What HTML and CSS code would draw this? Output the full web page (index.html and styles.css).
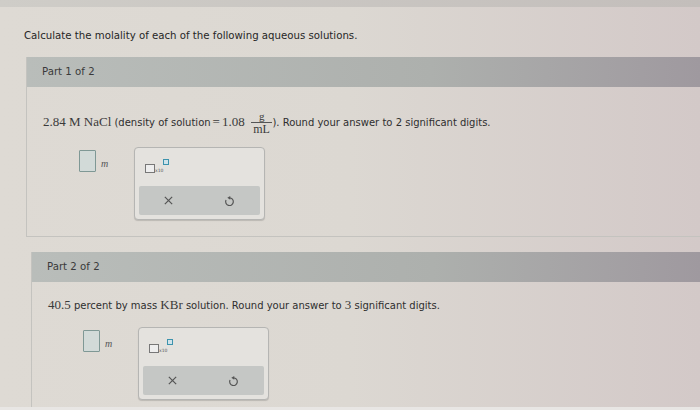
FILE: index.html
```html
<!DOCTYPE html>
<html>
<head>
<meta charset="utf-8">
<link rel="stylesheet" href="styles.css">
</head>
<body>
<div class="strip"></div>
<p class="title">Calculate the molality of each of the following aqueous solutions.</p>

<section class="part part1">
  <div class="part-head">Part 1 of 2</div>
  <div class="part-body">
    <p class="question"><span class="serif">2.84 M NaCl</span> (density of solution<span class="serif eq">=</span><span class="serif">1.08</span>
      <span class="frac"><span class="num">g</span><span class="den">mL</span></span>). Round your answer to 2 significant digits.</p>
    <div class="answer-row">
      <div class="answer"><span class="input"></span><span class="unit">m</span></div>
      <div class="widget">
        <div class="widget-top">
          <span class="sci"><span class="sq"></span><span class="x10">x10</span><span class="sup"></span></span>
        </div>
        <div class="widget-bar">
          <svg class="ico" width="11" height="11" viewBox="0 0 12 12"><path d="M2 2 L10 10 M10 2 L2 10" stroke="#555" stroke-width="1.3" fill="none"/></svg>
          <svg class="ico" width="11" height="12" viewBox="0 0 12 13"><path d="M6 3 A4.2 4.2 0 1 1 2.2 5.4" stroke="#555" stroke-width="1.3" fill="none"/><path d="M3.6 3 L6.8 1 L6.8 5 Z" fill="#555"/></svg>
        </div>
      </div>
    </div>
  </div>
</section>

<section class="part part2">
  <div class="part-head">Part 2 of 2</div>
  <div class="part-body">
    <p class="question"><span class="serif">40.5</span> percent by mass <span class="serif">KBr</span> solution. Round your answer to <span class="serif">3</span> significant digits.</p>
    <div class="answer-row">
      <div class="answer"><span class="input"></span><span class="unit">m</span></div>
      <div class="widget">
        <div class="widget-top">
          <span class="sci"><span class="sq"></span><span class="x10">x10</span><span class="sup"></span></span>
        </div>
        <div class="widget-bar">
          <svg class="ico" width="11" height="11" viewBox="0 0 12 12"><path d="M2 2 L10 10 M10 2 L2 10" stroke="#555" stroke-width="1.3" fill="none"/></svg>
          <svg class="ico" width="11" height="12" viewBox="0 0 12 13"><path d="M6 3 A4.2 4.2 0 1 1 2.2 5.4" stroke="#555" stroke-width="1.3" fill="none"/><path d="M3.6 3 L6.8 1 L6.8 5 Z" fill="#555"/></svg>
        </div>
      </div>
    </div>
  </div>
</section>
<div class="bottom"></div>
</body>
</html>
```
FILE: styles.css
```css
html, body {
  margin: 0;
  padding: 0;
}
body {
  width: 700px;
  height: 410px;
  overflow: hidden;
  position: relative;
  background: linear-gradient(90deg, #dedad4 0%, #dcd8d2 50%, #d3c9c8 100%);
  font-family: "DejaVu Sans", Verdana, sans-serif;
  font-size: 10.2px;
  color: #2e2e2e;
}
.strip {
  height: 7px;
  background: linear-gradient(90deg, #cfcdc8, #c3bebb);
}
.title {
  margin: 23px 0 0 24px;
  line-height: 11px;
  height: 11px;
  color: #262626;
}
.part {
  border-left: 1px solid #c4c3bf;
}
.part1 {
  margin: 16px 0 0 26px;
  border-bottom: 1px solid #c4c3bf;
  height: 179px;
}
.part2 {
  margin: 15px 0 0 31px;
  height: 160px;
}
.part-head {
  height: 30px;
  line-height: 30px;
  padding-left: 15px;
  background: linear-gradient(90deg, #b9bdba 0%, #adb0ad 60%, #9f999f 100%);
  color: #3a3a3a;
}
.part-body {
  padding-left: 16px;
}
.part1 .question {
  margin: 23px 0 0 0;
  line-height: 16px;
  font-size: 10px;
}
.part2 .question {
  margin: 15px 0 0 0;
  line-height: 16px;
  font-size: 10px;
}
.serif {
  font-family: "Liberation Serif", "Times New Roman", serif;
  font-size: 13px;
  color: #3a3a3a;
}
.eq { margin: 0 2px; }
.frac {
  display: inline-flex;
  flex-direction: column;
  align-items: center;
  vertical-align: middle;
  font-family: "Liberation Serif", serif;
  color: #3a3a3a;
  margin: 0 0 0 3px;
  position: relative;
  top: 1px;
}
.num { border-bottom: 1px solid #555; padding: 0 8px; font-size: 11px; line-height: 11px; }
.den { line-height: 13px; font-size: 12px; }
.answer-row {
  display: flex;
}
.part1 .answer-row { margin-top: 12px; margin-left: 36px; }
.part2 .answer-row { margin-top: 13px; margin-left: 35px; }
.answer {
  display: flex;
  align-items: flex-start;
  width: 55px;
  padding-top: 3px;
}
.input {
  width: 17px;
  height: 22px;
  box-sizing: border-box;
  border: 1px solid #7f9895;
  background: #d2dad8;
  border-radius: 1px;
}
.unit {
  font-family: "Liberation Serif", serif;
  font-style: italic;
  font-size: 10px;
  color: #555;
  margin: 8px 0 0 5px;
}
.widget {
  width: 131px;
  height: 73px;
  box-sizing: border-box;
  border: 1px solid #b5b5b3;
  border-radius: 4px;
  background: #e4e2de;
  box-shadow: 0 1px 1px rgba(0,0,0,0.15);
  display: flex;
  flex-direction: column;
  padding: 0 4px 4px 4px;
}
.widget-top {
  height: 38px;
}
.sci {
  display: flex;
  align-items: flex-end;
  margin: 11px 0 0 6px;
  height: 14px;
}
.sq {
  width: 10px;
  height: 9px;
  box-sizing: border-box;
  border: 1px solid #777;
  background: #eee;
}
.x10 {
  font-size: 4.5px;
  color: #555;
  margin-left: 0;
  line-height: 5px;
}
.sup {
  width: 6px;
  height: 6px;
  box-sizing: border-box;
  border: 1px solid #3d93ad;
  background: #cfe3ea;
  align-self: flex-start;
  margin-left: 0;
}
.widget-bar {
  flex: 1;
  background: #c5c7c5;
  border-radius: 2px;
  display: flex;
  align-items: center;
  justify-content: space-between;
  padding: 0 25px 0 24px;
}
.bottom {
  position: absolute;
  left: 0;
  top: 407px;
  width: 700px;
  height: 3px;
  background: #e8e6e4;
}
```
